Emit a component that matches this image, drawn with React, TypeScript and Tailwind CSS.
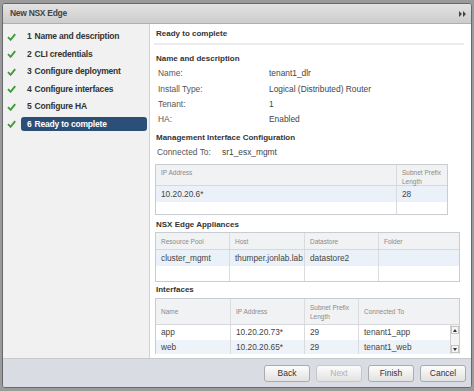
import React from "react";

const steps = [
    "Name and description",
    "CLI credentials",
    "Configure deployment",
    "Configure interfaces",
    "Configure HA",
    "Ready to complete",
];

function Check() {
    return (
        <svg width="9" height="8" viewBox="0 0 9 8">
            <path d="M1 4.2 L3.6 6.8 L8.2 1.2" fill="none" stroke="#3f9a3a" strokeWidth="1.9" />
        </svg>
    );
}

function Arrow({ up }: { up?: boolean }) {
    return (
        <div className="h-[8px] w-[8px] border border-[#c4c4c4] bg-[#f4f4f4] flex items-center justify-center">
            <svg width="4" height="3" viewBox="0 0 4 3">
                <path d={up ? "M0 3 L2 0 L4 3 Z" : "M0 0 L2 3 L4 0 Z"} fill="#333" />
            </svg>
        </div>
    );
}

// cellule d'en-tête de tableau
function Th({ children, first, center }: { children: React.ReactNode; first?: boolean; center?: boolean }) {
    return (
        <div
            className={`${first ? "" : "border-l border-[#d9dbde]"} px-[5px] text-[6.5px] leading-[9px] text-[#8a8a8a] flex ${center ? "items-center" : "items-start pt-[3px]"}`}
        >
            <div>{children}</div>
        </div>
    );
}

function Td({ children, first }: { children?: React.ReactNode; first?: boolean }) {
    return (
        <div
            className={`${first ? "" : "border-l border-[#d9dbde]"} px-[5px] text-[8.3px] text-[#444] flex items-center overflow-hidden whitespace-nowrap`}
        >
            {children}
        </div>
    );
}

export default function App() {
    return (
        <div className="w-[474px] h-[391px] bg-[#9b9b9b] pt-[3px] pl-[2px] overflow-hidden font-['Liberation_Sans',Arial,sans-serif]">
            <div className="w-[470px] h-[385px] border border-[#66686b] rounded-[3px] flex flex-col bg-[#f0f0f0] overflow-hidden">
                {/* barre de titre */}
                <div className="h-[20px] shrink-0 flex items-center justify-between pl-[7px] pr-[4px] bg-gradient-to-b from-[#e3e3e3] to-[#cccccc] border-b border-[#b0b0b0]">
                    <span className="text-[8.5px] font-bold tracking-[-0.3px] text-[#444]">New NSX Edge</span>
                    <svg width="8" height="6" viewBox="0 0 8 6">
                        <path d="M0 0 L3 3 L0 6 Z M4 0 L7 3 L4 6 Z" fill="#444" />
                    </svg>
                </div>

                <div className="flex flex-1 min-h-0">
                    {/* étapes */}
                    <div className="w-[146px] shrink-0 pt-[4px] bg-[#f1f1f1]">
                        {steps.map((s, i) => {
                            const active = i === steps.length - 1;
                            return (
                                <div key={s} className="h-[17.5px] flex items-center pl-[4px]">
                                    <Check />
                                    <div
                                        className={`ml-[5px] mr-[2px] flex-1 h-[14px] flex items-center gap-[3px] px-[6px] rounded-[3px] text-[8.5px] font-bold tracking-[-0.2px] ${active ? "bg-[#2c4f78] text-white" : "text-[#333]"}`}
                                    >
                                        <span>{i + 1}</span>
                                        <span>{s}</span>
                                    </div>
                                </div>
                            );
                        })}
                    </div>

                    {/* contenu */}
                    <div className="flex-1 bg-white border-l border-[#d2d2d2] flex flex-col text-[#444]">
                        <div className="h-[19px] flex items-center pl-[6px] text-[8px] font-bold text-[#333]">
                            Ready to complete
                        </div>
                        <div className="h-[2px] ml-[4px] mr-[7px] bg-[#ececec]" />

                        <div className="mt-[7px] h-[14px] flex items-center pl-[6px] text-[8px] font-bold text-[#333]">
                            Name and description
                        </div>
                        {[
                            ["Name:", "tenant1_dlr"],
                            ["Install Type:", "Logical (Distributed) Router"],
                            ["Tenant:", "1"],
                            ["HA:", "Enabled"],
                        ].map(([k, v]) => (
                            <div key={k} className="h-[15.3px] flex items-center pl-[8px] text-[8.4px]">
                                <div className="w-[111px] shrink-0 text-[#555]">{k}</div>
                                <div>{v}</div>
                            </div>
                        ))}

                        <div className="h-[19px] pt-[2px] flex items-center pl-[6px] text-[8px] font-bold text-[#333]">
                            Management Interface Configuration
                        </div>
                        <div className="h-[12px] flex items-center pl-[7px] text-[8.4px]">
                            <div className="w-[65px] shrink-0 text-[#555]">Connected To:</div>
                            <div>sr1_esx_mgmt</div>
                        </div>

                        <div className="mt-[6px] ml-[5px] w-[293px] border border-[#c9cdd2]">
                            <div className="grid grid-cols-[240px_1fr] h-[21px] bg-[#f1f2f4] border-b border-[#d6d8db]">
                                <Th first>IP Address</Th>
                                <Th>Subnet Prefix<br />Length</Th>
                            </div>
                            <div className="grid grid-cols-[240px_1fr] h-[16px] bg-[#eaf1f8]">
                                <Td first>10.20.20.6*</Td>
                                <Td>28</Td>
                            </div>
                            <div className="grid grid-cols-[240px_1fr] h-[12px]">
                                <Td first />
                                <Td />
                            </div>
                        </div>

                        <div className="h-[17px] pt-[2px] flex items-center pl-[6px] text-[8px] font-bold text-[#333]">
                            NSX Edge Appliances
                        </div>
                        <div className="ml-[5px] w-[305px] border border-[#c9cdd2]">
                            <div className="grid grid-cols-[73px_75px_74px_1fr] h-[17px] bg-[#f1f2f4] border-b border-[#d6d8db]">
                                <Th first center>Resource Pool</Th>
                                <Th center>Host</Th>
                                <Th center>Datastore</Th>
                                <Th center>Folder</Th>
                            </div>
                            <div className="grid grid-cols-[73px_75px_74px_1fr] h-[16px] bg-[#eaf1f8]">
                                <Td first>cluster_mgmt</Td>
                                <Td>thumper.jonlab.lab</Td>
                                <Td>datastore2</Td>
                                <Td />
                            </div>
                            <div className="grid grid-cols-[73px_75px_74px_1fr] h-[15px]">
                                <Td first />
                                <Td />
                                <Td />
                                <Td />
                            </div>
                        </div>

                        <div className="h-[16px] flex items-center pl-[6px] text-[8px] font-bold text-[#333]">
                            Interfaces
                        </div>
                        <div className="ml-[5px] w-[305px] border border-[#c9cdd2] border-b-0">
                            <div className="grid grid-cols-[74px_74px_54px_1fr] h-[26px] bg-[#f1f2f4] border-b border-[#d6d8db]">
                                <Th first center>Name</Th>
                                <Th center>IP Address</Th>
                                <Th center>Subnet Prefix<br />Length</Th>
                                <Th center>Connected To</Th>
                            </div>
                            <div className="flex">
                                <div className="flex-1">
                                    <div className="grid grid-cols-[74px_74px_54px_1fr] h-[15px]">
                                        <Td first>app</Td>
                                        <Td>10.20.20.73*</Td>
                                        <Td>29</Td>
                                        <Td>tenant1_app</Td>
                                    </div>
                                    <div className="grid grid-cols-[74px_74px_54px_1fr] h-[14px] bg-[#eef3f9]">
                                        <Td first>web</Td>
                                        <Td>10.20.20.65*</Td>
                                        <Td>29</Td>
                                        <Td>tenant1_web</Td>
                                    </div>
                                </div>
                                <div className="w-[9px] border-l border-[#d0d0d0] bg-[#f3f3f3] flex flex-col justify-between py-[1px]">
                                    <Arrow up />
                                    <Arrow />
                                </div>
                            </div>
                        </div>
                    </div>
                </div>

                {/* pied */}
                <div className="h-[29px] shrink-0 bg-[#d9dce2] border-t border-[#c6c9ce] flex items-start justify-end gap-[6px] pt-[6px] pr-[5px]">
                    {["Back", "Next", "Finish", "Cancel"].map((b) => (
                        <div
                            key={b}
                            className={`w-[46px] h-[17px] rounded-[3px] border border-[#a9abae] bg-gradient-to-b from-[#fcfcfc] to-[#e2e2e2] flex items-center justify-center text-[8.5px] ${b === "Next" ? "text-[#b2b2b2] border-[#c4c6c9]" : "text-[#333]"}`}
                        >
                            {b}
                        </div>
                    ))}
                </div>
            </div>
        </div>
    );
}
